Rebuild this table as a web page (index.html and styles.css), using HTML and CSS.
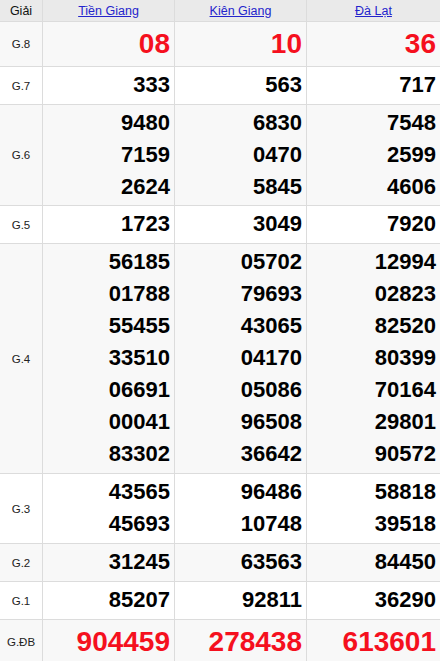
FILE: index.html
```html
<!DOCTYPE html>
<html lang="vi">
<head>
<meta charset="utf-8">
<title>Kết quả xổ số</title>
<link rel="stylesheet" href="styles.css">
</head>
<body>
<div class="board">
  <div class="row head">
    <div class="cell label">Giải</div>
    <div class="cell prov"><a href="#">Tiền Giang</a></div>
    <div class="cell prov"><a href="#">Kiên Giang</a></div>
    <div class="cell prov"><a href="#">Đà Lạt</a></div>
  </div>
  <div class="row alt">
    <div class="cell label">G.8</div>
    <div class="cell num big red"><span>08</span></div>
    <div class="cell num big red"><span>10</span></div>
    <div class="cell num big red"><span>36</span></div>
  </div>
  <div class="row">
    <div class="cell label">G.7</div>
    <div class="cell num"><span>333</span></div>
    <div class="cell num"><span>563</span></div>
    <div class="cell num"><span>717</span></div>
  </div>
  <div class="row alt tight">
    <div class="cell label">G.6</div>
    <div class="cell num"><span>9480</span><span>7159</span><span>2624</span></div>
    <div class="cell num"><span>6830</span><span>0470</span><span>5845</span></div>
    <div class="cell num"><span>7548</span><span>2599</span><span>4606</span></div>
  </div>
  <div class="row">
    <div class="cell label">G.5</div>
    <div class="cell num"><span>1723</span></div>
    <div class="cell num"><span>3049</span></div>
    <div class="cell num"><span>7920</span></div>
  </div>
  <div class="row alt">
    <div class="cell label">G.4</div>
    <div class="cell num"><span>56185</span><span>01788</span><span>55455</span><span>33510</span><span>06691</span><span>00041</span><span>83302</span></div>
    <div class="cell num"><span>05702</span><span>79693</span><span>43065</span><span>04170</span><span>05086</span><span>96508</span><span>36642</span></div>
    <div class="cell num"><span>12994</span><span>02823</span><span>82520</span><span>80399</span><span>70164</span><span>29801</span><span>90572</span></div>
  </div>
  <div class="row">
    <div class="cell label">G.3</div>
    <div class="cell num"><span>43565</span><span>45693</span></div>
    <div class="cell num"><span>96486</span><span>10748</span></div>
    <div class="cell num"><span>58818</span><span>39518</span></div>
  </div>
  <div class="row alt">
    <div class="cell label">G.2</div>
    <div class="cell num"><span>31245</span></div>
    <div class="cell num"><span>63563</span></div>
    <div class="cell num"><span>84450</span></div>
  </div>
  <div class="row">
    <div class="cell label">G.1</div>
    <div class="cell num"><span>85207</span></div>
    <div class="cell num"><span>92811</span></div>
    <div class="cell num"><span>36290</span></div>
  </div>
  <div class="row alt">
    <div class="cell label">G.ĐB</div>
    <div class="cell num big red"><span>904459</span></div>
    <div class="cell num big red"><span>278438</span></div>
    <div class="cell num big red"><span>613601</span></div>
  </div>
</div>
</body>
</html>
```
FILE: styles.css
```css
html, body {
  margin: 0;
  padding: 0;
  background: #fff;
}
body {
  font-family: "Liberation Sans", Arial, sans-serif;
  color: #000;
  overflow: hidden;
}
.board {
  width: 440px;
}
.row {
  display: grid;
  grid-template-columns: 43px 132px 132px 133px;
  background: #fff;
}
.row.alt {
  background: #f8f8f8;
}
.row.head {
  background: #eaeaea;
}
.cell {
  box-sizing: border-box;
  border-right: 1px solid #dcdcdc;
  border-bottom: 1px solid #dcdcdc;
}
.cell:last-child {
  border-right: none;
}
.head .cell {
  height: 22px;
  display: flex;
  align-items: center;
  justify-content: center;
  font-size: 12.5px;
  color: #111;
}
.prov a {
  color: #2424cc;
  text-decoration: underline;
}
.label {
  display: flex;
  align-items: center;
  justify-content: center;
  font-size: 11.5px;
  color: #222;
}
.num {
  display: flex;
  flex-direction: column;
  align-items: flex-end;
  padding: 2px 4px 3px 0;
  font-weight: bold;
  font-size: 22px;
  line-height: 32px;
}
.tight .num {
  padding-bottom: 2px;
}
.num.big {
  font-size: 28px;
  line-height: 39px;
}
.red {
  color: #f5101e;
}
```
